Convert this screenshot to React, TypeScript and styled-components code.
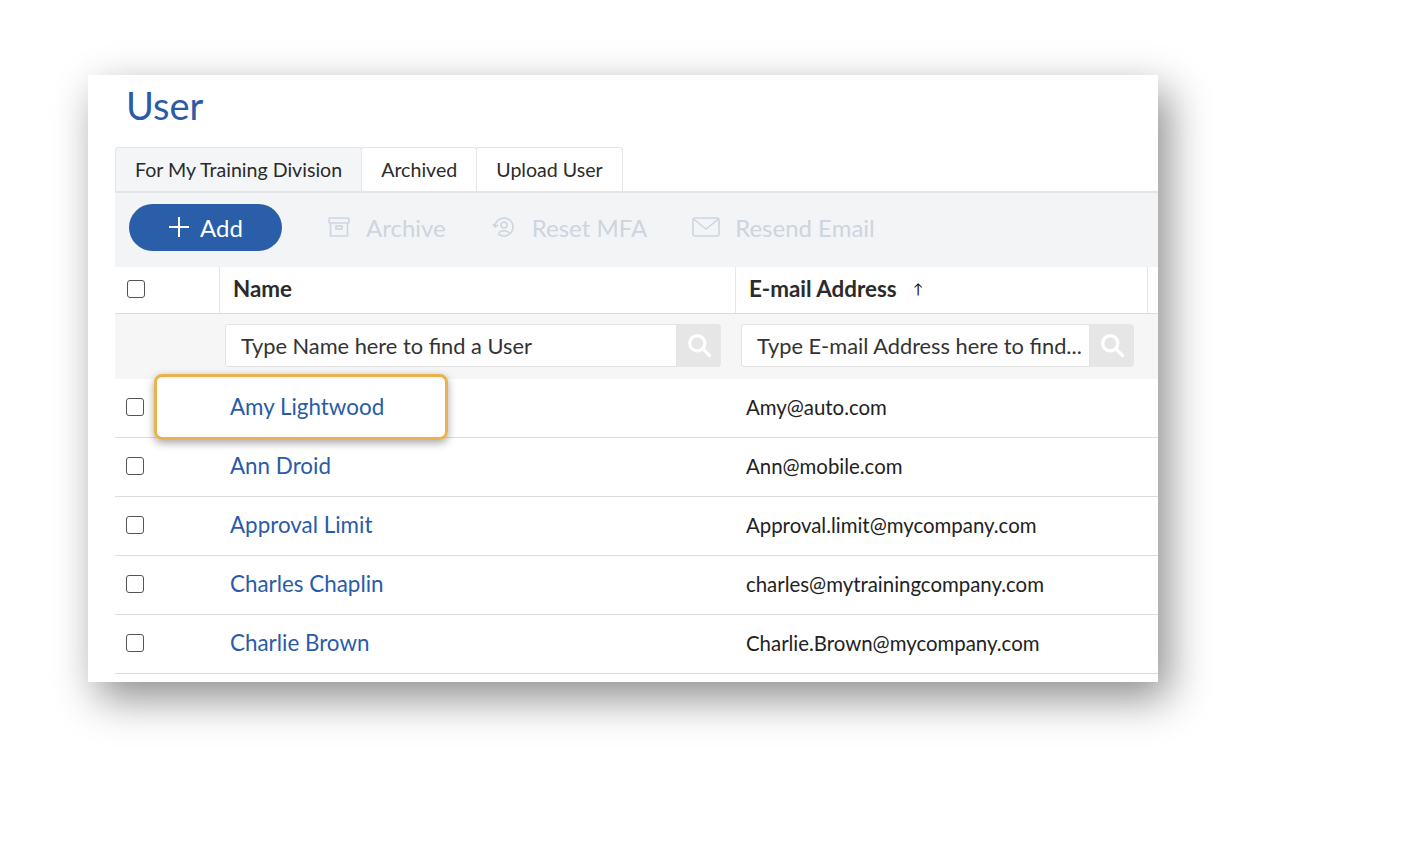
import React from "react";
import styled, { createGlobalStyle } from "styled-components";

const Global = createGlobalStyle`
  body { margin: 0; background: #fff; font-family: Lato, "Open Sans", sans-serif; }
`;
const Page = styled.div`
  width: 1416px; height: 852px; padding: 75px 0 0 88px; box-sizing: border-box;
`;
const Card = styled.div`
  width: 1070px; height: 607px; background: #fff; overflow: hidden; position: relative;
  box-shadow: 10px 16px 40px rgba(0,0,0,0.45);
  padding: 0 0 0 27px; box-sizing: border-box;
`;
const Title = styled.h1`
  margin: 8px 0 0 11px; font-size: 38px; font-weight: 400; color: #2a5ba8; height: 64px; line-height: 44px;
`;
const Tabs = styled.div`
  display: flex; border-bottom: 2px solid #e3e5e8; height: 44px; width: 1100px;
`;
const Tab = styled.div<{ $active?: boolean }>`
  padding: 0 19px; display: flex; align-items: center; font-size: 19.6px; color: #2b2b2b;
  background: ${p => (p.$active ? "#f4f5f7" : "#fff")};
  border: 1px solid #e3e5e8; border-bottom: none; border-radius: 3px 3px 0 0; margin-right: -1px;
`;
const Toolbar = styled.div`
  background: #f3f4f6; height: 74px; display: flex; align-items: center; padding: 0 0 6px 14px; gap: 45px; width: 1100px;
  box-sizing: border-box;
`;
const AddBtn = styled.button`
  background: #2a5ea8; color: #fff; border: none; border-radius: 24px; height: 47px; width: 153px;
  font: 400 24px Lato, sans-serif; display: flex; align-items: center; justify-content: center; gap: 10px;
`;
const Action = styled.div`
  display: flex; align-items: center; gap: 15px; font-size: 24px; color: #cdd5df;
`;
const Row = styled.div<{ $bg?: string; $h: number; $border?: boolean }>`
  display: grid; grid-template-columns: 104px 516px 412px 100px; height: ${p => p.$h}px;
  background: ${p => p.$bg || "#fff"}; width: 1132px;
  border-bottom: ${p => (p.$border ? "1px solid #dcdcdc" : "none")}; box-sizing: border-box;
`;
const Cell = styled.div<{ $sep?: boolean; $pad?: number }>`
  display: flex; align-items: center; padding-left: ${p => p.$pad ?? 0}px; padding-bottom: 3px;
  border-left: ${p => (p.$sep ? "1px solid #e6e6e6" : "none")};
`;
const Box = styled.span`
  width: 18px; height: 18px; border: 1.5px solid #555; border-radius: 3px; margin-left: 12px; box-sizing: border-box;
`;
const Head = styled.span`font-size: 22.4px; font-weight: 700; color: #2b2b2b;`;
const Search = styled.div`
  display: flex; height: 43px; width: 496px;
`;
const Input = styled.div`
  flex: 1; border: 1px solid #e2e2e2; background: #fff; border-radius: 3px 0 0 3px; display: flex; align-items: center;
  padding-left: 15px; font-size: 21.8px; color: #333; white-space: nowrap; overflow: hidden;
`;
const SBtn = styled.div`
  width: 44px; background: #e6e6e6; border-radius: 0 4px 4px 0; display: flex; align-items: center; justify-content: center;
`;
const Link = styled.span`font-size: 22.4px; color: #2a5ba8;`;
const Mail = styled.span`font-size: 20.4px; color: #222;`;
const Highlight = styled.div`
  position: absolute; left: 66px; top: 299px; width: 294px; height: 66px; box-sizing: border-box;
  border: 3px solid #e9b24e; border-radius: 8px; box-shadow: 0 3px 8px rgba(0,0,0,0.35);
`;

const SearchIcon = () => (
  <svg width="28" height="28" viewBox="0 0 24 24" fill="none" stroke="#fff" strokeWidth="2.8" strokeLinecap="round">
    <circle cx="10.5" cy="10.5" r="6.5" /><path d="M15.5 15.5L21 21" />
  </svg>
);

const users = [
  ["Amy Lightwood", "Amy@auto.com"],
  ["Ann Droid", "Ann@mobile.com"],
  ["Approval Limit", "Approval.limit@mycompany.com"],
  ["Charles Chaplin", "charles@mytrainingcompany.com"],
  ["Charlie Brown", "Charlie.Brown@mycompany.com"],
];

export default function App() {
  return (
    <Page>
      <Global />
      <Card>
        <Title>User</Title>
        <Tabs>
          <Tab $active>For My Training Division</Tab>
          <Tab>Archived</Tab>
          <Tab>Upload User</Tab>
        </Tabs>
        <Toolbar>
          <AddBtn>
            <svg width="22" height="22" viewBox="0 0 22 22" stroke="#fff" strokeWidth="2"><path d="M11 1v20M1 11h20" /></svg>
            Add
          </AddBtn>
          <Action>
            <svg width="24" height="22" viewBox="0 0 24 22" fill="none" stroke="#cdd5df" strokeWidth="1.6">
              <rect x="2" y="2" width="20" height="5" rx="1" /><path d="M3.5 7v13h17V7" /><rect x="9" y="10" width="6" height="3" />
            </svg>
            Archive
          </Action>
          <Action>
            <svg width="26" height="24" viewBox="0 0 26 24" fill="none" stroke="#cdd5df" strokeWidth="1.6">
              <path d="M4 12a9 9 0 1 1 3 6.7" /><path d="M2 9l2 3 3-2" /><circle cx="13" cy="10" r="3" /><path d="M8 18c1.5-3 8.5-3 10 0" />
            </svg>
            Reset MFA
          </Action>
          <Action>
            <svg width="28" height="20" viewBox="0 0 28 20" fill="none" stroke="#cdd5df" strokeWidth="1.6">
              <rect x="1" y="1" width="26" height="18" rx="2" /><path d="M1.5 2l12.5 10 12.5-10" />
            </svg>
            Resend Email
          </Action>
        </Toolbar>
        <Row $h={47} $border>
          <Cell><Box /></Cell>
          <Cell $sep $pad={13}><Head>Name</Head></Cell>
          <Cell $sep $pad={13}><Head>E-mail Address</Head><span style={{ marginLeft: 16, fontSize: 14 }}>↑</span></Cell>
          <Cell $sep />
        </Row>
        <Row $h={65} $bg="#f6f6f6">
          <Cell />
          <Cell $pad={6}><Search><Input>Type Name here to find a User</Input><SBtn><SearchIcon /></SBtn></Search></Cell>
          <Cell $pad={6}><Search style={{ width: 393 }}><Input>Type E-mail Address here to find...</Input><SBtn><SearchIcon /></SBtn></Search></Cell>
          <Cell />
        </Row>
        {users.map(([n, e]) => (
          <Row key={n} $h={59} $border>
            <Cell><Box style={{ marginLeft: 11 }} /></Cell>
            <Cell $pad={11}><Link>{n}</Link></Cell>
            <Cell $pad={11}><Mail>{e}</Mail></Cell>
            <Cell />
          </Row>
        ))}
        <Highlight />
      </Card>
    </Page>
  );
}
